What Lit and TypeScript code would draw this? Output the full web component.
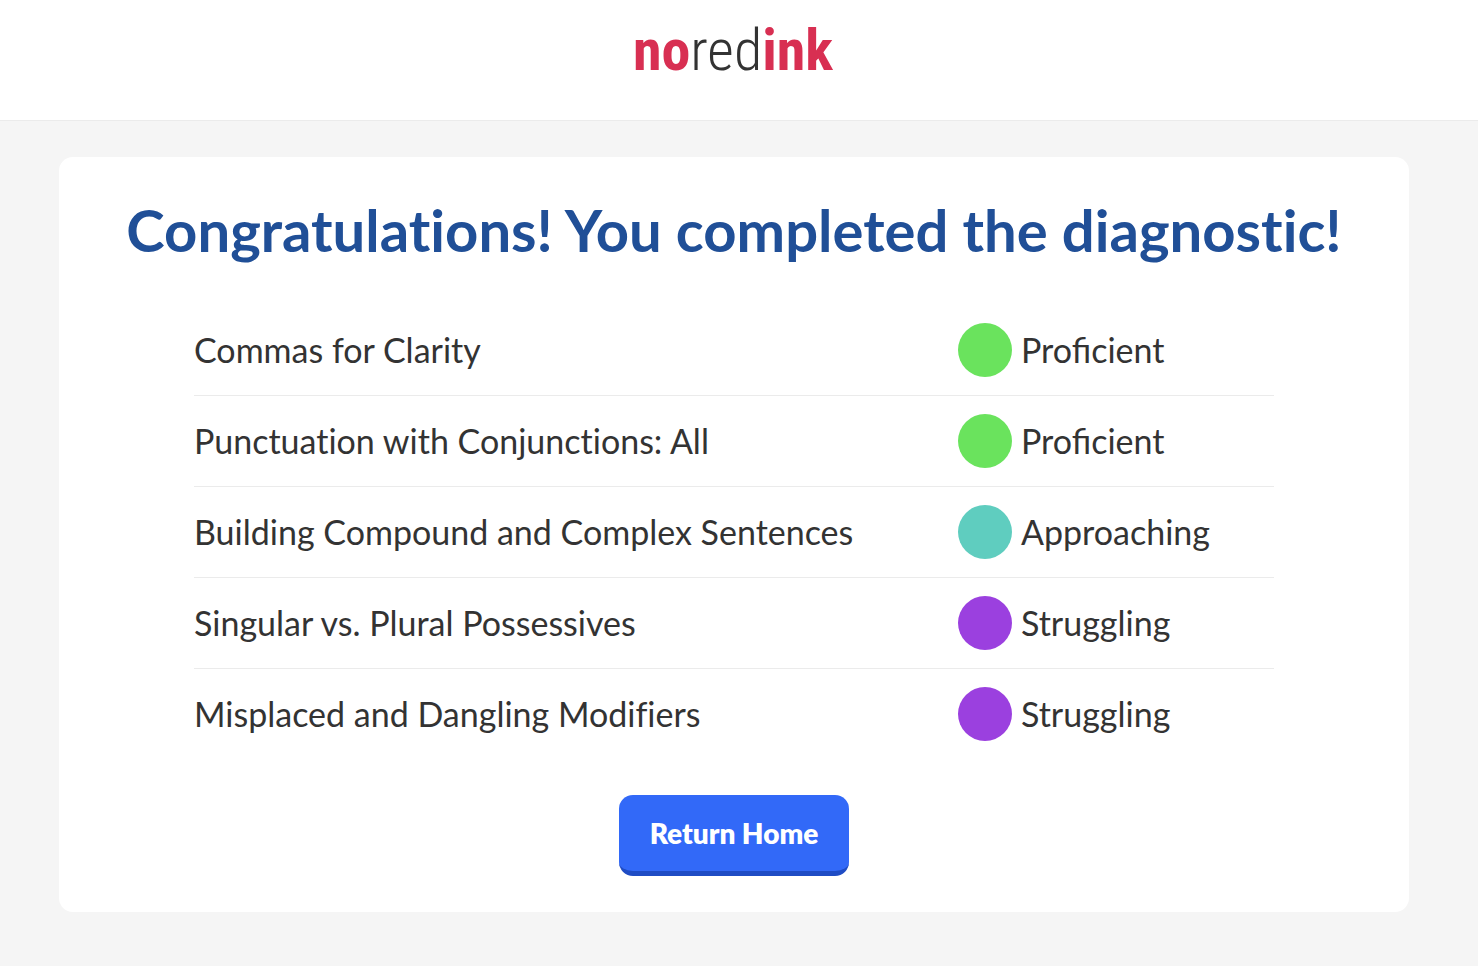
import { LitElement, html, css } from "lit";
import { customElement } from "lit/decorators.js";

interface Result {
  topic: string;
  level: string;
}

const RESULTS: Result[] = [
  { topic: "Commas for Clarity", level: "Proficient" },
  { topic: "Punctuation with Conjunctions: All", level: "Proficient" },
  { topic: "Building Compound and Complex Sentences", level: "Approaching" },
  { topic: "Singular vs. Plural Possessives", level: "Struggling" },
  { topic: "Misplaced and Dangling Modifiers", level: "Struggling" },
];

@customElement("app-root")
export class AppRoot extends LitElement {
  static styles = css`
    :host {
      display: flex;
      flex-direction: column;
      box-sizing: border-box;
      min-height: 100vh;
      background: #f5f5f5;
      color: #333;
      font-family: "Lato", "Open Sans", sans-serif;
    }
    * {
      box-sizing: border-box;
    }
    .top {
      display: flex;
      justify-content: center;
      padding: 20px 12px 40px 0;
      background: #fff;
      border-bottom: 1px solid #ebebeb;
    }
    .logo {
      display: flex;
      font: 300 58px/60px "Roboto Condensed", "Liberation Sans Narrow", sans-serif;
      color: #333;
      text-decoration: none;
    }
    .logo b {
      font-weight: 700;
      color: #d82f52;
    }
    .card {
      margin: 36px 69px 54px 59px;
      padding: 38px 40px 36px;
      border-radius: 14px;
      background: #fff;
    }
    h1 {
      margin: 0;
      color: #204f97;
      font-size: 58px;
      line-height: 70px;
      font-weight: 700;
      text-align: center;
      font-variant-ligatures: none;
    }
    table {
      width: calc(100% - 190px);
      margin: 40px auto 0;
      border-collapse: collapse;
      font-size: 34px;
      line-height: 54px;
    }
    th,
    td {
      padding: 18px 0;
      text-align: left;
      font-weight: 400;
    }
    th {
      font-variant-ligatures: none;
    }
    tr + tr {
      border-top: 1px solid #ebebeb;
    }
    td {
      width: 316px;
    }
    .level {
      display: flex;
      align-items: center;
      gap: 9px;
    }
    .dot {
      width: 54px;
      height: 54px;
      border-radius: 50%;
    }
    .proficient { background: #6ae35d; }
    .approaching { background: #5fcdbf; }
    .struggling { background: #9b40df; }
    .home {
      display: block;
      margin: 36px auto 0;
      width: 230px;
      height: 81px;
      border: 0;
      border-bottom: 5px solid #1f4cc4;
      border-radius: 14px;
      background: #3269f8;
      color: #fff;
      font: 800 28px/36px "Lato", sans-serif;
    }
  `;

  render() {
    return html`
      <header class="top">
        <a class="logo" href="#"><b>no</b>red<b>ink</b></a>
      </header>
      <main class="card">
        <h1>Congratulations! You completed the diagnostic!</h1>
        <table>
          <tbody>
            ${RESULTS.map(
              (r) => html`<tr>
                <th scope="row">${r.topic}</th>
                <td>
                  <div class="level">
                    <span class="dot ${r.level.toLowerCase()}"></span>${r.level}
                  </div>
                </td>
              </tr>`
            )}
          </tbody>
        </table>
        <button class="home" type="button">Return Home</button>
      </main>
    `;
  }
}
